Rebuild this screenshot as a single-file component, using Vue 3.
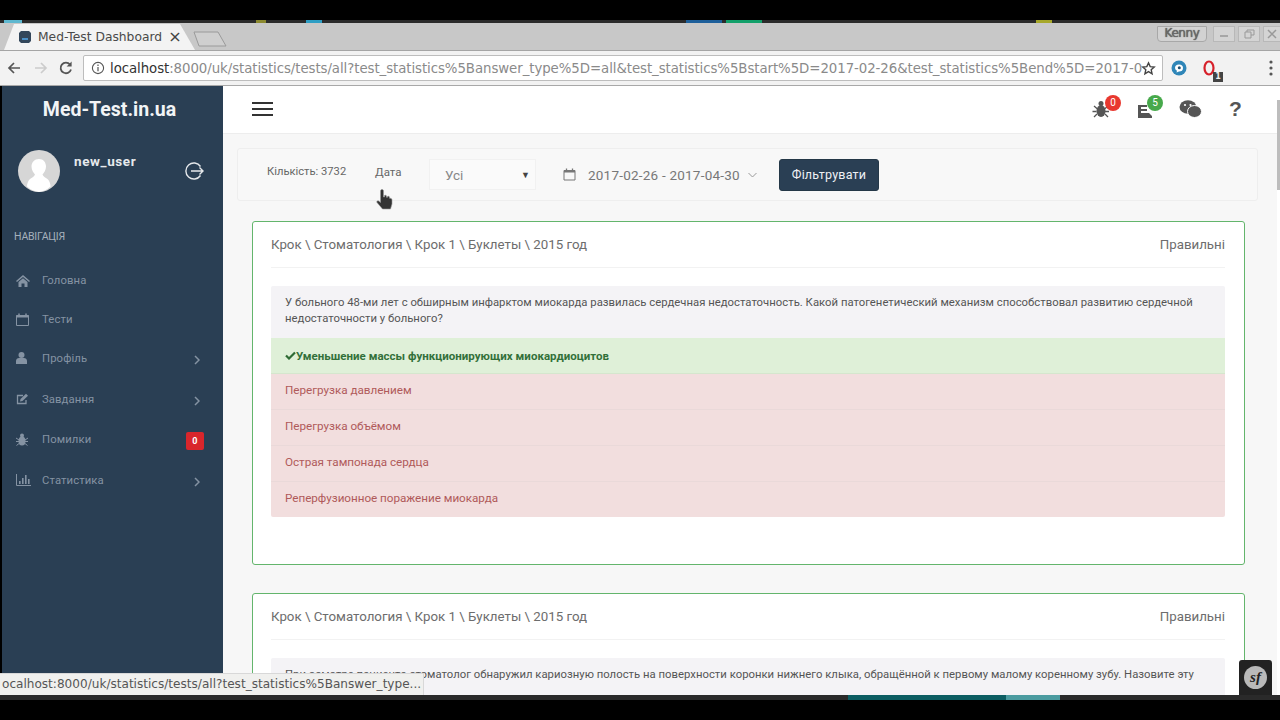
<script setup>
const nav = [
  { label: 'Головна', icon: 'home', h: 39 },
  { label: 'Тести', icon: 'cal', h: 38 },
  { label: 'Профіль', icon: 'user', arrow: true, h: 40 },
  { label: 'Завдання', icon: 'edit', arrow: true, h: 42 },
  { label: 'Помилки', icon: 'bug', badge: '0', h: 38 },
  { label: 'Статистика', icon: 'chart', arrow: true, h: 44 },
]
const wrong = ['Перегрузка давлением', 'Перегрузка объёмом', 'Острая тампонада сердца', 'Реперфузионное поражение миокарда']
const crumb = 'Крок \\ Стоматология \\ Крок 1 \\ Буклеты \\ 2015 год'
const url = ':8000/uk/statistics/tests/all?test_statistics%5Banswer_type%5D=all&test_statistics%5Bstart%5D=2017-02-26&test_statistics%5Bend%5D=2017-0'
</script>

<template>
  <div class="screen">
    <div class="topblack"></div>
    <div class="deskstrip">
      <i class="spark s1"></i><i class="spark s2"></i><i class="spark s3"></i><i class="spark s4"></i><i class="spark s5"></i><i class="spark s6"></i>
    </div>
    <div class="tabstrip">
      <div class="tab">
        <svg class="favicon" width="14" height="12" viewBox="0 0 14 12"><path d="M3 0h8l2 2v8l-2 2H3L1 10V2z" fill="#33475b"/><rect x="4" y="7" width="6" height="2" fill="#4a90c8"/></svg>
        <span class="tabtitle">Med-Test Dashboard</span>
        <span class="tabclose">×</span>
      </div>
      <svg class="newtab" width="34" height="16" viewBox="0 0 34 16"><path d="M1 1h24l8 14H6z" fill="#cfcfcf" stroke="#9a9a9a"/></svg>
      <div class="spacer"></div>
      <div class="profile">Kenny</div>
      <div class="winbtn"><svg width="10" height="10" viewBox="0 0 10 10"><path d="M1 7h8" stroke="#999" stroke-width="1.5"/></svg></div>
      <div class="winbtn"><svg width="11" height="10" viewBox="0 0 11 10"><path d="M1 3h6v6H1zM3 3V1h7v5H7" fill="none" stroke="#999"/></svg></div>
      <div class="winbtn last"><svg width="10" height="10" viewBox="0 0 10 10"><path d="M1 1l8 8M9 1l-8 8" stroke="#999" stroke-width="1.5"/></svg></div>
    </div>
    <div class="toolbar">
      <svg class="tb" width="16" height="16" viewBox="0 0 16 16"><path d="M14 8H3M8 3L3 8l5 5" fill="none" stroke="#555" stroke-width="1.7"/></svg>
      <svg class="tb" width="16" height="16" viewBox="0 0 16 16"><path d="M2 8h11M8 3l5 5-5 5" fill="none" stroke="#ccc" stroke-width="1.7"/></svg>
      <svg class="tb" width="16" height="16" viewBox="0 0 16 16"><path d="M13 9.500A5.300 5.300 0 1 1 12 4.500" fill="none" stroke="#555" stroke-width="1.800"/><path d="M13.600 1.600v5h-5z" fill="#555"/></svg>
      <div class="omnibox">
        <svg width="14" height="14" viewBox="0 0 14 14" class="info"><circle cx="7" cy="7" r="5.600" fill="none" stroke="#555" stroke-width="1.100"/><path d="M7 6v4.200M7 3.600v1.300" stroke="#555" stroke-width="1.200"/></svg>
        <span class="url"><b>localhost</b>{{ url }}</span>
        <svg class="star" width="15" height="15" viewBox="0 0 24 24"><path d="M12 3l2.700 6 6.500.7-4.900 4.300 1.400 6.400L12 17l-5.700 3.400 1.400-6.400L2.800 9.700l6.500-.7z" fill="none" stroke="#444" stroke-width="2.200"/></svg>
      </div>
      <svg class="ext1" width="16" height="16" viewBox="0 0 16 16"><circle cx="8" cy="8" r="7.500" fill="#2f86b8"/><path d="M4 8a4 3.500 0 1 1 4 3.500L5.500 12.500 6 10.800A3.500 3.500 0 0 1 4 8z" fill="#fff"/><circle cx="8.300" cy="7.700" r="1.500" fill="#21506f"/></svg>
      <div class="ext2">
        <svg width="13" height="16" viewBox="0 0 13 16"><ellipse cx="6" cy="8" rx="4.500" ry="6.500" fill="none" stroke="#d6202a" stroke-width="2.200"/></svg>
        <span class="extbadge">1</span>
      </div>
      <svg class="menu" width="4" height="16" viewBox="0 0 4 16"><circle cx="2" cy="2" r="1.600" fill="#555"/><circle cx="2" cy="8" r="1.600" fill="#555"/><circle cx="2" cy="14" r="1.600" fill="#555"/></svg>
    </div>

    <div class="viewport">
      <aside class="sidebar">
        <div class="brand">Med-Test.in.ua</div>
        <div class="userbox">
          <div class="avatar">
            <svg width="42" height="42" viewBox="0 0 42 42"><circle cx="21" cy="21" r="21" fill="#d6d6d6"/><path d="M21 9c4.500 0 7 3.500 7 7.500 0 3.500-2 6.500-3.500 8 .5 2 3 3 5 4.500 2 1.500 3 5 3 7.500A21 21 0 0 1 21 42a21 21 0 0 1-12-5.500c0-2.500 1-6 3-7.500s4.500-2.500 5-4.500c-1.500-1.500-3.500-4.500-3.500-8C13.500 12.500 16.500 9 21 9z" fill="#fff"/></svg>
          </div>
          <div class="uname">new_user</div>
          <svg class="logout" width="20" height="20" viewBox="0 0 20 20"><path d="M15.500 5.500A8 8 0 1 0 15.500 14.500" fill="none" stroke="#e6e9ec" stroke-width="1.400"/><path d="M6 10h12M14.500 6.500L18 10l-3.500 3.500" fill="none" stroke="#e6e9ec" stroke-width="1.400"/></svg>
        </div>
        <div class="navhead">НАВІГАЦІЯ</div>
        <nav class="nav">
          <div v-for="n in nav" :key="n.label" class="navitem" :style="{ height: n.h + 'px' }">
            <span class="navicon">
              <svg v-if="n.icon === 'home'" width="14" height="12" viewBox="0 0 14 12"><path d="M7 0l7 6-1 1-6-5-6 5-1-1zM2.500 7L7 3.200 11.500 7v5H8.500V8.500h-3V12h-3z" fill="#8593a3"/></svg>
              <svg v-else-if="n.icon === 'cal'" width="13" height="13" viewBox="0 0 13 13"><path d="M.5 2.500h12v10H.5z" fill="none" stroke="#8593a3"/><path d="M.5 2h12v2.500H.5z" fill="#8593a3"/><path d="M3 .5v2M10 .5v2" stroke="#8593a3" stroke-width="1.500"/></svg>
              <svg v-else-if="n.icon === 'user'" width="11" height="12" viewBox="0 0 11 12"><circle cx="5.500" cy="3" r="3" fill="#8593a3"/><path d="M0 12V9c0-2 1.500-3 3-3h5c1.500 0 3 1 3 3v3z" fill="#8593a3"/></svg>
              <svg v-else-if="n.icon === 'edit'" width="13" height="12" viewBox="0 0 13 12"><path d="M10 7v3.500H1.500V2.500H7" fill="none" stroke="#8593a3" stroke-width="1.300"/><path d="M4.500 6L10 .8 12 2.800 6.500 8 4 8.500z" fill="#8593a3"/></svg>
              <svg v-else-if="n.icon === 'bug'" width="12" height="13" viewBox="0 0 12 13"><ellipse cx="6" cy="8" rx="3.500" ry="4.500" fill="#8593a3"/><circle cx="6" cy="2.500" r="2" fill="#8593a3"/><path d="M0 5l3 2M12 5L9 7M0 8.500h3M12 8.500H9M.5 12.500L3 10.500M11.500 12.500L9 10.500" stroke="#8593a3"/></svg>
              <svg v-else width="15" height="12" viewBox="0 0 15 12"><path d="M.5 0v11.500h14.500" fill="none" stroke="#8593a3"/><path d="M3 7h1.600v3H3zM6 4h1.600v6H6zM9 1h1.600v9H9zM12 5h1.600v5H12z" fill="#8593a3"/></svg>
            </span>
            <span class="navlabel">{{ n.label }}</span>
            <svg v-if="n.arrow" class="chev" width="6" height="10" viewBox="0 0 6 10"><path d="M1 1l4 4-4 4" fill="none" stroke="#8593a3" stroke-width="1.500"/></svg>
            <span v-if="n.badge" class="navbadge">{{ n.badge }}</span>
          </div>
        </nav>
      </aside>

      <main class="main">
        <header class="topnav">
          <div class="burger"><i></i><i></i><i></i></div>
          <div class="topicons">
            <div class="ti">
              <svg width="17" height="18" viewBox="0 0 17 18"><ellipse cx="9" cy="11" rx="4.500" ry="6" fill="#555"/><circle cx="9" cy="3.500" r="2.500" fill="#555"/><path d="M2 6l3.500 3M16 6l-3.500 3M.5 11.500h4M17 11.500h-4M2 17l3-3M16 17l-3-3" stroke="#555" stroke-width="1.300"/></svg>
              <span class="tb-badge red">0</span>
            </div>
            <div class="ti">
              <svg class="listicon" width="14" height="13" viewBox="0 0 14 13"><path d="M0 0h9v2H3v2h6v2H3v2h8l3 3v2H0z" fill="#555"/></svg>
              <span class="tb-badge green">5</span>
            </div>
            <div class="ti">
              <svg width="23" height="18" viewBox="0 0 23 18"><ellipse cx="9" cy="7" rx="8.500" ry="6.800" fill="#555"/><ellipse cx="15.500" cy="11.500" rx="7" ry="6" fill="#555" stroke="#fff"/><circle cx="6" cy="5" r="1.100" fill="#fff"/><circle cx="11.500" cy="5" r="1.100" fill="#fff"/></svg>
            </div>
            <div class="ti help">?</div>
          </div>
        </header>

        <div class="content">
          <section class="filter">
            <span class="count">Кількість: 3732</span>
            <span class="datelbl">Дата</span>
            <div class="select"><span>Усі</span><span class="caret">▼</span></div>
            <div class="range">
              <svg width="13" height="13" viewBox="0 0 13 13"><path d="M1 2.500h11v9.500H1z" fill="none" stroke="#777"/><path d="M1 2h11v2.500H1z" fill="#777"/><path d="M3.500.5v2M9.500.5v2" stroke="#777" stroke-width="1.300"/></svg>
              <span class="rangetext">2017-02-26 - 2017-04-30</span>
              <svg width="9" height="6" viewBox="0 0 9 6"><path d="M.5 1L4.500 5l4-4" fill="none" stroke="#999"/></svg>
            </div>
            <button class="btn">Фільтрувати</button>
          </section>

          <article class="card first">
            <div class="cardhead"><span>{{ crumb }}</span><span>Правильні</span></div>
            <div class="list">
              <div class="q">У больного 48-ми лет с обширным инфарктом миокарда развилась сердечная недостаточность. Какой патогенетический механизм способствовал развитию сердечной недостаточности у больного?</div>
              <div class="opt ok">
                <svg width="11" height="9" viewBox="0 0 11 9"><path d="M1 4.500L4 7.500 10 1.500" fill="none" stroke="#2e6b34" stroke-width="2.200"/></svg>Уменьшение массы функционирующих миокардиоцитов
              </div>
              <div v-for="w in wrong" :key="w" class="opt bad">{{ w }}</div>
            </div>
          </article>

          <article class="card">
            <div class="cardhead"><span>{{ crumb }}</span><span>Правильні</span></div>
            <div class="list">
              <div class="q">При осмотре пациента стоматолог обнаружил кариозную полость на поверхности коронки нижнего клыка, обращённой к первому малому коренному зубу. Назовите эту</div>
            </div>
          </article>
        </div>

        <div class="scroll"><i></i></div>
      </main>

      <div class="status">ocalhost:8000/uk/statistics/tests/all?test_statistics%5Banswer_type...</div>
      <div class="sf"><span>sf</span></div>
      <svg class="cursor" width="18" height="22" viewBox="0 0 18 22"><path d="M6 1.500c1 0 1.500.7 1.500 1.500v6h1V7.500c1.200-.7 2 0 2 .8v1h1V8.500c1.200-.6 2 0 2 .8v1h.8c1 0 1.700.7 1.700 1.700v4l-1.500 5H6.500L1 14.500c-.7-1 .5-2.300 1.700-1.500L4.500 14.500V3c0-.8.500-1.500 1.500-1.500z" fill="#333" stroke="#999" stroke-width=".6"/></svg>
    </div>

    <div class="bottomstrip"><i class="t1"></i><i class="t2"></i></div>
    <div class="bottomblack"></div>
  </div>
</template>

<style>
html, body { margin: 0; padding: 0; background: #000; }
</style>

<style scoped>
.screen { width: 1280px; height: 720px; display: flex; flex-direction: column; overflow: hidden; background: #000; font-family: Roboto, "Liberation Sans", sans-serif; }
.topblack { height: 20px; flex: none; }
.deskstrip { height: 3px; flex: none; background: #2b2b2b; position: relative; }
.spark { position: absolute; top: 0; height: 3px; }
.s1 { left: 4px; width: 18px; background: #5fb8d0; }
.s2 { left: 256px; width: 10px; background: #8c8a30; }
.s3 { left: 306px; width: 16px; background: #2e9ec4; }
.s4 { left: 686px; width: 36px; background: #1d5f9a; }
.s5 { left: 726px; width: 36px; background: #12a06a; }
.s6 { left: 1036px; width: 16px; background: #a7a82a; }

.tabstrip { height: 28px; flex: none; background: #c8c8c8; border-bottom: 1px solid #a5a5a5; box-sizing: border-box; display: flex; align-items: flex-end; padding-left: 4px; }
.tab { width: 191px; height: 26px; background: #f3f3f3; box-sizing: border-box; padding-left: 14px; display: flex; align-items: center; clip-path: polygon(0 100%, 10px 0, 176px 0, 191px 100%); font-family: "DejaVu Sans", sans-serif; font-size: 12.300px; color: #4a4a4a; flex: none; }
.favicon { margin-right: 6px; flex: none; }
.tabtitle { white-space: nowrap; }
.tabclose { margin-left: 6px; font-size: 16px; color: #444; line-height: 1; }
.newtab { margin-left: -2px; margin-bottom: 3px; flex: none; }
.spacer { flex: 1; }
.profile { align-self: flex-start; margin-top: 3px; width: 50px; height: 16px; box-sizing: border-box; border: 1px solid #a8a8a8; border-radius: 0 0 4px 4px; font: 12px/13px "DejaVu Sans", sans-serif; color: #6a6a6a; text-align: center; background: #d2d2d2; margin-right: 6px; text-shadow: 0 0 1px #333; letter-spacing: -.4px; }
.winbtn { align-self: flex-start; margin-top: 3px; width: 22px; height: 16px; box-sizing: border-box; border: 1px solid #b8b8b8; margin-right: 3px; display: flex; align-items: center; justify-content: center; background: #d4d4d4; }
.winbtn.last { width: 17px; margin-right: 0; border-right: none; }

.toolbar { height: 35px; flex: none; background: #f2f2f2; border-bottom: 1px solid #a8a8a8; box-sizing: border-box; display: flex; align-items: center; position: relative; }
.tb { flex: none; margin-left: 6px; }
.tb + .tb { margin-left: 11px; }
.toolbar .tb:nth-child(3) { margin-left: 9px; }
.omnibox { width: 1080px; height: 26px; margin-left: 9px; background: #fff; border: 1px solid #bdbdbd; border-radius: 2px; box-sizing: border-box; display: flex; align-items: center; padding-left: 7px; flex: none; }
.info { flex: none; margin-right: 5px; }
.url { width: 1030px; white-space: nowrap; font-family: "DejaVu Sans", sans-serif; font-size: 13.330px; color: #8a8a8a; letter-spacing: -0.070px; }
.url b { font-weight: 400; color: #333; }
.star { flex: none; margin-left: 1px; }
.ext1 { position: absolute; left: 1171px; top: 9px; }
.ext2 { position: absolute; left: 1203px; top: 9px; }
.extbadge { position: absolute; left: 10px; top: 12px; width: 10px; height: 10px; background: #444; color: #eee; font: 700 8px/10px "DejaVu Sans", sans-serif; text-align: center; }
.menu { position: absolute; left: 1269px; top: 9px; }

.viewport { height: 609px; flex: none; display: flex; position: relative; overflow: hidden; }
.sidebar { width: 221px; margin-left: 2px; background: #2a3f54; flex: none; color: #8593a3; }
.brand { height: 47px; text-align: center; font-size: 19.500px; font-weight: 700; color: #f2f4f6; line-height: 47px; padding-right: 6px; }
.userbox { height: 78px; position: relative; }
.avatar { position: absolute; left: 16px; top: 17px; width: 42px; height: 42px; }
.uname { position: absolute; left: 72px; top: 20px; font-size: 13.500px; font-weight: 700; color: #e6e9ec; letter-spacing: .6px; }
.logout { position: absolute; left: 183px; top: 28px; }
.navhead { padding-left: 12px; font-size: 10.500px; height: 15px; line-height: 15px; margin-top: 18px; color: #a5b0bb; letter-spacing: -.2px; }
.nav { margin-top: 17px; }
.navitem { display: flex; align-items: center; position: relative; padding-left: 14px; box-sizing: border-box; font-size: 11.300px; letter-spacing: .1px; }
.navicon { width: 26px; flex: none; display: flex; align-items: center; }
.navlabel { white-space: nowrap; }
.chev { position: absolute; left: 192px; top: 50%; margin-top: -3px; }
.navbadge { position: absolute; left: 184px; top: 12px; width: 18px; height: 18px; background: #d9262c; color: #fff; border-radius: 2px; font-size: 9px; font-weight: 700; text-align: center; line-height: 18px; }

.main { flex: 1; min-width: 0; background: #f7f7f7; position: relative; }
.topnav { height: 47px; background: #fff; border-bottom: 1px solid #ededed; display: flex; align-items: center; justify-content: space-between; padding-left: 29px; box-sizing: content-box; }
.burger { display: flex; flex-direction: column; gap: 4px; margin-top: -2px; }
.burger i { display: block; width: 21px; height: 2px; background: #333; }
.topicons { display: flex; align-items: center; height: 100%; margin-right: 22px; }
.ti { position: relative; width: 45px; height: 20px; display: flex; justify-content: center; align-items: center; margin-top: -2px; }
.ti.help { font-size: 21px; font-weight: 700; color: #555; font-family: "Liberation Sans", sans-serif; }
.listicon { margin-top: 5px; margin-right: 1px; }
.tb-badge { position: absolute; top: -4px; width: 16px; height: 16px; border-radius: 50%; color: #fff; font-size: 10px; line-height: 16px; text-align: center; }
.red { left: 27px; background: #e8382f; }
.green { left: 24px; background: #47a94b; }

.content { padding: 14px 0 0 14px; width: 1040px; box-sizing: border-box; }
.filter { height: 51px; width: 1019px; background: #f8f8f8; border: 1px solid #eeeeee; border-radius: 3px; box-sizing: content-box; display: flex; align-items: center; font-size: 12px; color: #666; }
.count { margin-left: 29px; margin-top: -6px; width: 108px; font-size: 11.200px; white-space: nowrap; flex: none; }
.datelbl { margin-top: -6px; width: 54px; font-size: 11.500px; flex: none; }
.select { width: 107px; height: 31px; box-sizing: border-box; background: #fafafa; border: 1px solid #f1f1f1; display: flex; align-items: center; justify-content: space-between; padding: 0 5px 0 15px; font-size: 13.500px; color: #888; flex: none; }
.caret { font-size: 9px; color: #444; }
.range { margin-left: 27px; display: flex; align-items: center; width: 216px; color: #777; font-size: 13.500px; flex: none; }
.rangetext { margin-left: 12px; margin-right: 8px; letter-spacing: .22px; white-space: nowrap; }
.btn { width: 100px; height: 32px; background: #2a3f54; color: #eef1f4; border: 1px solid #253848; border-radius: 3px; font: 12.500px Roboto, sans-serif; padding: 0; letter-spacing: .2px; flex: none; }

.card { width: 991px; margin-left: 15px; background: #fff; border: 1px solid #63b56c; border-radius: 3px; box-sizing: content-box; }
.first { margin-top: 20px; height: 342px; margin-bottom: 28px; }
.cardhead { height: 45px; margin: 0 19px 0 18px; border-bottom: 1px solid #f2f2f2; display: flex; justify-content: space-between; align-items: center; font-size: 13.300px; color: #6d6d6d; }
.list { margin: 18px 19px 0 18px; font-size: 11.700px; letter-spacing: -.03px; }
.q { background: #f4f3f6; padding: 9px 14px 9px; line-height: 16px; color: #555; border-radius: 2px 2px 0 0; height: 52px; box-sizing: border-box; font-size: 11.300px; letter-spacing: .02px; }
.opt { height: 36px; box-sizing: border-box; padding-left: 14px; display: flex; align-items: center; border-bottom: 1px solid #ead9d9; }
.ok { background: #dff0d8; color: #33703a; font-weight: 700; border-bottom-color: #d5e6cd; font-size: 11.500px; letter-spacing: .02px; }
.bad { background: #f2dede; color: #b05a5a; padding-bottom: 3px; }
.bad:last-child { border-bottom: none; border-radius: 0 0 2px 2px; height: 35px; }

.scroll { position: absolute; right: 0; top: 0; bottom: 0; width: 3px; background: #fff; }
.scroll i { display: block; margin-top: 14px; width: 3px; height: 90px; background: #bdbdbd; }

.status { position: absolute; left: 0; bottom: 0; width: 424px; height: 22px; padding-left: 2px; box-sizing: border-box; background: #f0f0ee; border-top: 1px solid #d8d8d8; border-right: 1px solid #d8d8d8; overflow: hidden; white-space: nowrap; font: 12.080px/20px "DejaVu Sans", sans-serif; color: #555; }
.sf { position: absolute; left: 1239px; bottom: 0; width: 33px; height: 35px; background: #222; border-radius: 3px 3px 0 0; display: flex; align-items: center; justify-content: center; }
.sf span { width: 23px; height: 23px; border-radius: 50%; background: #b9b9b9; color: #222; font: italic 700 15px/22px "Liberation Serif", serif; text-align: center; }
.cursor { position: absolute; left: 376px; top: 102px; }

.bottomstrip { height: 5px; flex: none; background: #2a2a2a; position: relative; }
.bottomstrip i { position: absolute; top: 0; height: 5px; }
.t1 { left: 848px; width: 158px; background: #0c5d62; }
.t2 { left: 1006px; width: 54px; background: #4b9ba0; }
.bottomblack { flex: 1; background: #000; }
</style>
